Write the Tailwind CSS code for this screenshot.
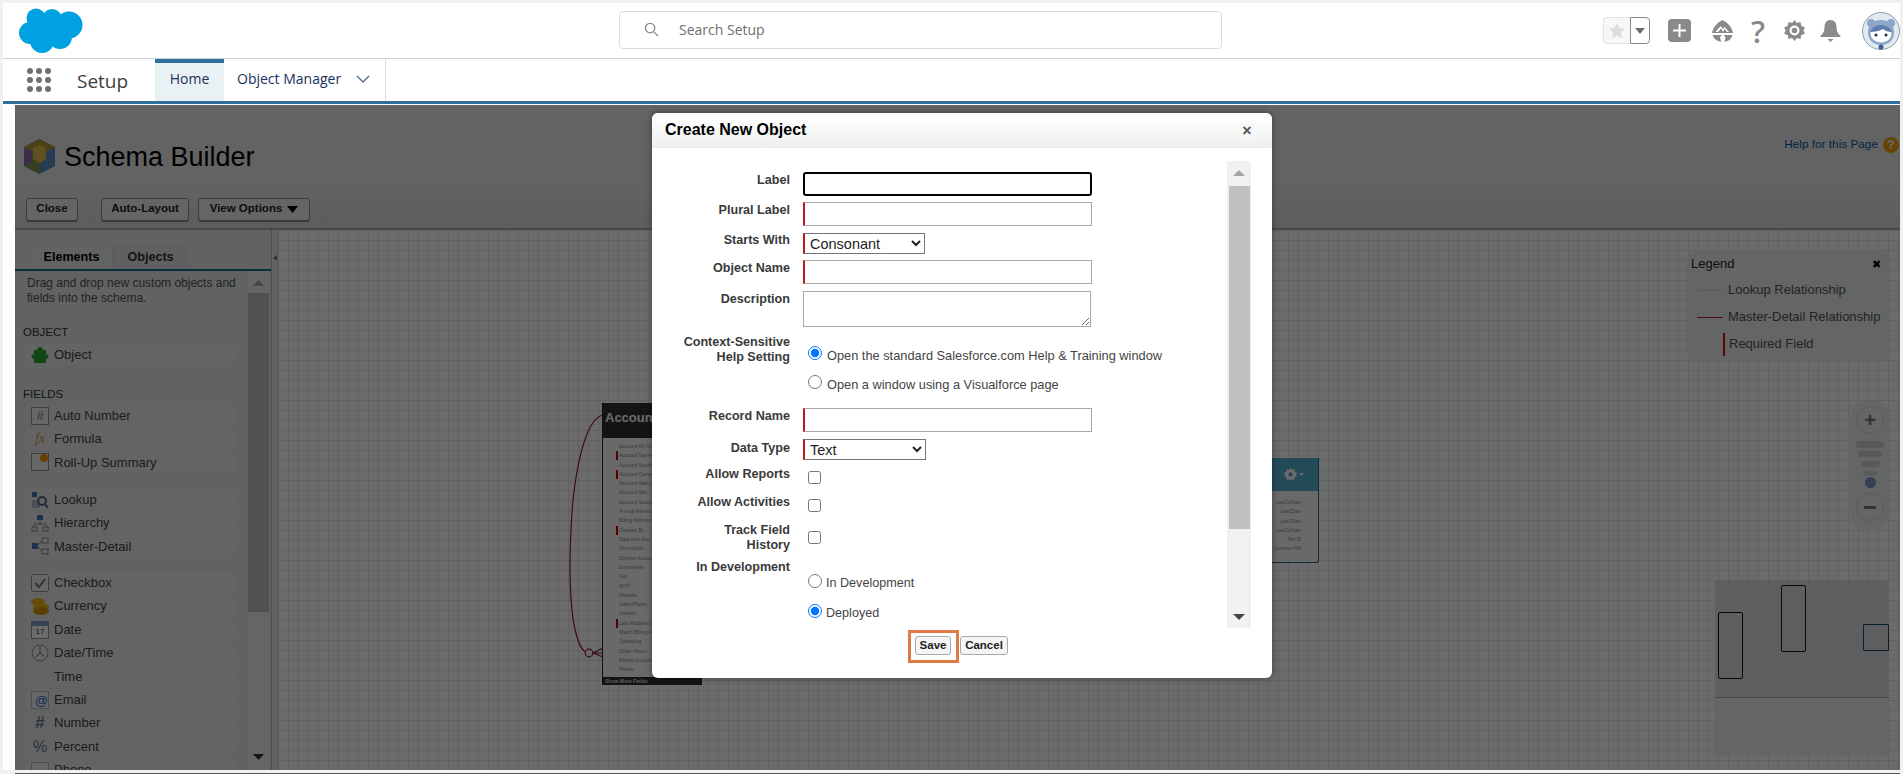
<!DOCTYPE html>
<html lang="en">
<head>
<meta charset="utf-8">
<title>Schema Builder</title>
<script src="https://cdn.jsdelivr.net/npm/@tailwindcss/browser@4"></script>
</head>
<body class="m-0">
<div class="relative w-[1903px] h-[774px] overflow-hidden bg-[#f1f1f1] pt-[3px] pr-[3px] pl-[3px] flex flex-col font-['Liberation_Sans',Arial,sans-serif] text-[#222]">

  <!-- global header -->
  <header class="h-[56px] shrink-0 bg-white border-b border-[#c4cfdd] flex items-center relative">
    <svg class="ml-[16px] w-[64px] h-[46px] shrink-0" viewBox="0 0 64 46" fill="#00a1e0">
      <circle cx="17" cy="10" r="9.5"/><circle cx="33" cy="11" r="10"/><circle cx="50" cy="17" r="13.5"/><circle cx="11" cy="25" r="11"/><circle cx="23" cy="33" r="12"/><circle cx="41" cy="29" r="12"/><rect x="12" y="10" width="38" height="22"/>
    </svg>
    <div class="ml-[536px] mb-[2px] w-[604px] h-[38px] border border-[#dddbda] rounded-[4px] flex items-center pl-[24px]">
      <svg class="w-[15px] h-[15px]" viewBox="0 0 16 16" fill="none" stroke="#8a8886" stroke-width="1.4"><circle cx="6.5" cy="6.5" r="5"/><path d="M10.5 10.5L15 15"/></svg>
      <span class="ml-[20px] text-[14px] text-[#706e6b] font-['Open_Sans',sans-serif]">Search Setup</span>
    </div>
    <div class="ml-[381px] flex items-center h-full">
      <div class="w-[47px] h-[27px] flex">
        <div class="w-[27px] flex items-center justify-center bg-[#f7f7f7] border border-r-0 border-[#e3e3e3] rounded-l-[4px]">
          <svg class="w-[18px] h-[18px]" viewBox="0 0 20 20" fill="#dcdcdc"><path d="M10 1l2.7 6 6.3.6-4.8 4.2 1.5 6.4L10 14.8 4.300 18.200l1.500-6.400L1 7.600 7.300 7z"/></svg>
        </div>
        <div class="flex-1 flex items-center justify-center border border-[#8a8a8a] rounded-r-[4px]">
          <svg class="w-[10px] h-[6px]" viewBox="0 0 10 6" fill="#706e6b"><path d="M0 0h10L5 6z"/></svg>
        </div>
      </div>
      <svg class="ml-[18px] w-[23px] h-[23px]" viewBox="0 0 23 23"><rect width="23" height="23" rx="4" fill="#8a8a8a"/><path d="M11.500 5v13M5 11.500h13" stroke="#fff" stroke-width="2"/></svg>
      <svg class="ml-[21px] w-[21px] h-[22px]" viewBox="0 0 21 22" fill="#8a8a8a"><path d="M10.500 0C15 2 20 7 21 13H0C1 7 6 2 10.500 0z"/><path d="M.5 15h9.500l-2 2 1 5C5 21 2 19 .5 15zM20.500 15H12l1.500 3-1 4c4-1 7-3 8-7z"/><path d="M3.500 12l5-6 2.500 3 1.500-2 4.500 5h-2l-2.500-3-1.500 3-2-3.500L6 12z" fill="#fff"/></svg>
      <span class="ml-[18px] w-[15px] text-[31px] leading-[32px] font-semibold text-[#8a8a8a] font-['Open_Sans',sans-serif]">?</span>
      <svg class="ml-[18px] w-[21px] h-[21px]" viewBox="0 0 21 21"><path d="M10.500 0l2.300 3 3.700-1 .7 3.800 3.800 1.700-1.700 3 1.700 3-3.800 1.700-.7 3.800-3.700-1-2.300 3-2.300-3-3.700 1-.7-3.800L0 13.500l1.700-3L0 7.500l3.800-1.700.7-3.800 3.700 1z" fill="#8a8a8a"/><circle cx="10.500" cy="10.500" r="5" fill="#fff"/><circle cx="10.500" cy="10.500" r="2.800" fill="#8a8a8a"/></svg>
      <svg class="ml-[15px] w-[21px] h-[22px]" viewBox="0 0 21 22" fill="#8a8a8a"><path d="M10.500 0c4 0 6 3 6 7 0 4 1 6 4 9v1H.5v-1c3-3 4-5 4-9 0-4 2-7 6-7z"/><path d="M7.500 19h6l-3 3z"/></svg>
      <svg class="ml-[21px] w-[38px] h-[38px]" viewBox="0 0 38 38">
        <circle cx="19" cy="19" r="18.500" fill="#e3e9f1" stroke="#8e9bb0"/>
        <circle cx="9" cy="11" r="4" fill="#8ea6cc"/><circle cx="29" cy="11" r="4" fill="#8ea6cc"/>
        <path d="M6 20c0-8 6-12 13-12s13 4 13 12c0 8-5 13-13 13S6 28 6 20z" fill="#8ea6cc"/>
        <ellipse cx="19" cy="22" rx="10.500" ry="8.500" fill="#fff"/>
        <path d="M8 20c3-6 7-7 11-7s8 1 11 7c-4 0-7-1-9-3-3 2-8 3-13 3z" fill="#5f7fb0"/>
        <circle cx="14" cy="23" r="1.500" fill="#1c2f4e"/><circle cx="24" cy="23" r="1.500" fill="#1c2f4e"/>
        <circle cx="19" cy="35" r="2.500" fill="#3c5f92"/>
      </svg>
    </div>
  </header>

  <!-- app nav -->
  <nav class="h-[42px] shrink-0 bg-white flex items-stretch">
    <div class="ml-[24px] w-[24px] self-center grid grid-cols-3 gap-[3px]">
      <span class="w-[6px] h-[6px] rounded-full bg-[#706e6b]"></span><span class="w-[6px] h-[6px] rounded-full bg-[#706e6b]"></span><span class="w-[6px] h-[6px] rounded-full bg-[#706e6b]"></span>
      <span class="w-[6px] h-[6px] rounded-full bg-[#706e6b]"></span><span class="w-[6px] h-[6px] rounded-full bg-[#706e6b]"></span><span class="w-[6px] h-[6px] rounded-full bg-[#706e6b]"></span>
      <span class="w-[6px] h-[6px] rounded-full bg-[#706e6b]"></span><span class="w-[6px] h-[6px] rounded-full bg-[#706e6b]"></span><span class="w-[6px] h-[6px] rounded-full bg-[#706e6b]"></span>
    </div>
    <span class="ml-[26px] w-[78px] self-center pt-[2px] text-[19px] text-[#3e3e3c] font-['Open_Sans',sans-serif]">Setup</span>
    <a class="w-[69px] bg-[#eaf1f5] border-t-[4px] border-[#2e6f9e] flex items-center justify-center text-[14px] text-[#16325c] font-['Open_Sans',sans-serif] pb-[7px]">Home</a>
    <a class="w-[162px] border-r border-[#dddbda] flex items-center pl-[13px] text-[14px] text-[#16325c] font-['Open_Sans',sans-serif] pb-[3px]">Object Manager
      <svg class="ml-[15px] w-[14px] h-[8px]" viewBox="0 0 14 8" fill="none" stroke="#54698d" stroke-width="1.300"><path d="M1 1l6 6 6-6"/></svg>
    </a>
  </nav>
  <div class="h-[3px] shrink-0 bg-[#2e6f9e]"></div>
  <div class="h-[1px] shrink-0 bg-white"></div>

  <!-- page under the modal mask -->
  <main class="flex-1 min-h-0 bg-white pl-[12px] flex">
    <div class="relative flex-1 min-w-0 flex flex-col overflow-hidden">
      <!-- page head -->
      <div class="h-[125px] shrink-0 bg-gradient-to-b from-[#ececec] from-60% to-[#dcdddd] border-b-[2px] border-[#aeaeae] relative">
        <div class="flex items-center pt-[34px] pl-[9px] h-[69px]">
          <svg class="w-[31px] h-[35px]" viewBox="0 0 31 35"><path d="M15.500 0L31 8v19l-15.500 8L0 27V8z" fill="#5a8fc4"/><path d="M15.500 0L31 8l-15.500 8L0 8z" fill="#b79a3b"/><path d="M0 8l15.500 8v19L0 27z" fill="#7c9a4a"/><path d="M0 8l8 4v11L0 27z" fill="#8e6bb0"/><path d="M9 9l6.500-3L22 9v11l-6.500 4L9 20z" fill="#e0c24a"/></svg>
          <h1 class="ml-[9px] mt-[2px] text-[27px] leading-none text-black font-normal">Schema Builder</h1>
        </div>
        <div class="flex items-center pl-[11px] mt-[23px] h-[24px] text-[11.500px] font-bold text-[#222]">
          <button class="w-[52px] h-[23px] rounded-[3px] border border-[#8f8f8f] bg-[#f0f0f0] shadow-[0_1px_0_#888]">Close</button>
          <span class="ml-[11px] w-px h-[32px] bg-[#dcdcdc]"></span>
          <button class="ml-[11px] w-[88px] h-[23px] rounded-[3px] border border-[#8f8f8f] bg-[#f0f0f0] shadow-[0_1px_0_#888]">Auto-Layout</button>
          <button class="ml-[9px] w-[112px] h-[23px] rounded-[3px] border border-[#8f8f8f] bg-[#f0f0f0] shadow-[0_1px_0_#888] flex items-center justify-center gap-[5px]">View Options
            <svg class="w-[11px] h-[7px]" viewBox="0 0 11 7" fill="#000"><path d="M0 0h11L5.500 7z"/></svg>
          </button>
          <span class="ml-[12px] w-px h-[32px] bg-[#dcdcdc]"></span>
        </div>
        <div class="absolute right-[1px] top-[31px] flex items-center text-[11.800px] text-[#015ba7]">Help for this Page
          <span class="ml-[5px] w-[16px] h-[16px] rounded-full bg-[#f5a10f] text-white font-bold text-[12px] leading-[16px] text-center">?</span>
        </div>
      </div>

      <div class="flex-1 min-h-0 flex">
        <!-- sidebar -->
        <aside class="w-[257px] shrink-0 bg-[#e6e9ea] border-r border-[#bbb] flex flex-col overflow-hidden">
          <div class="h-[41px] shrink-0 pt-[15px] pl-[15px] flex border-b-[2px] border-[#1a6d92] text-[12.600px]">
            <div class="w-[83px] h-[24px] bg-[#e9ebec] border border-b-0 border-[#dcdfe0] rounded-t-[3px] flex items-center justify-center font-bold text-black">Elements</div>
            <div class="w-[75px] h-[24px] bg-[#e2e5e6] border border-b-0 border-[#dcdfe0] rounded-t-[3px] flex items-center justify-center font-bold text-[#333]">Objects</div>
          </div>
          <div class="flex-1 min-h-0 flex">
            <div class="w-[233px] shrink-0 overflow-hidden">
              <p class="mt-[5px] ml-[12px] pb-[5px] text-[12px] leading-[14.500px] text-[#555] border-b border-[#dadddf]">Drag and drop new custom objects and fields into the schema.</p>
              <div class="mt-[14px] ml-[8px] text-[11.500px] leading-[14px] text-[#333]">OBJECT</div>
              <div class="mt-[5px] ml-[10px] w-[212px] flex flex-col gap-[2.4px] text-[13px] text-[#444]">
                <div class="h-[21px] rounded-[8px] bg-[#eeefef] flex items-center">
                  <svg class="ml-[6px] w-[18px] h-[18px]" viewBox="0 0 18 18" fill="#2ea836"><path d="M6 4a3 3 0 1 1 6 0h3v4a2.500 2.500 0 1 1 0 5v4H3v-4a2.500 2.500 0 1 1 0-5V4z"/></svg>
                  <span class="ml-[5px]">Object</span>
                </div>
              </div>
              <div class="mt-[22px] ml-[8px] text-[11.500px] leading-[14px] text-[#333]">FIELDS</div>
              <div class="mt-[4px] ml-[10px] w-[212px] flex flex-col gap-[2.4px] text-[13px] text-[#444]">
                <div class="h-[21px] rounded-[8px] bg-[#eeefef] flex items-center"><span class="ml-[6px] w-[18px] h-[18px] border border-[#8a94a0] bg-[#f6f6f6] text-[13px] leading-[16px] text-center text-[#5f7da0]">#</span><span class="ml-[5px]">Auto Number</span></div>
                <div class="h-[21px] rounded-[8px] bg-[#eeefef] flex items-center"><span class="ml-[6px] w-[18px] h-[18px] text-[14px] leading-[17px] text-center italic text-[#d19a3a] font-['Liberation_Serif',serif]">fx</span><span class="ml-[5px]">Formula</span></div>
                <div class="h-[21px] rounded-[8px] bg-[#eeefef] flex items-center"><span class="relative ml-[6px] w-[18px] h-[18px] border border-[#8a94a0] bg-[#f6f6f6]"><span class="absolute right-0 top-0 w-[8px] h-[8px] rounded-full bg-[#f59a00]"></span></span><span class="ml-[5px]">Roll-Up Summary</span></div>
                <div class="mt-[14px] h-[21px] rounded-[8px] bg-[#eeefef] flex items-center"><svg class="ml-[6px] w-[18px] h-[18px]" viewBox="0 0 18 18" fill="none"><rect x="1" y="1" width="5" height="5" fill="#3f76c4"/><rect x="1" y="9" width="8" height="8" fill="#bbb"/><circle cx="11" cy="10" r="4" stroke="#4a6a8a" stroke-width="2"/><path d="M14 13l3 4" stroke="#4a6a8a" stroke-width="2"/></svg><span class="ml-[5px]">Lookup</span></div>
                <div class="h-[21px] rounded-[8px] bg-[#eeefef] flex items-center"><svg class="ml-[6px] w-[18px] h-[18px]" viewBox="0 0 18 18" fill="none" stroke="#8a8a8a"><rect x="6" y="1" width="6" height="5" fill="#3f76c4" stroke="none"/><path d="M9 6v4M3 13v-3h12v3"/><rect x="1" y="13" width="5" height="4" fill="#eee"/><rect x="12" y="13" width="5" height="4" fill="#eee"/></svg><span class="ml-[5px]">Hierarchy</span></div>
                <div class="h-[21px] rounded-[8px] bg-[#eeefef] flex items-center"><svg class="ml-[6px] w-[18px] h-[18px]" viewBox="0 0 18 18" fill="none" stroke="#8a8a8a"><rect x="1" y="6" width="6" height="6" fill="#3f76c4" stroke="none"/><path d="M7 8l4-4M7 10l4 4"/><rect x="11" y="1" width="6" height="5" fill="#eee"/><rect x="11" y="12" width="6" height="5" fill="#eee"/></svg><span class="ml-[5px]">Master-Detail</span></div>
                <div class="mt-[13px] h-[21px] rounded-[8px] bg-[#eeefef] flex items-center"><svg class="ml-[6px] w-[18px] h-[18px]" viewBox="0 0 18 18" fill="none"><rect x=".5" y=".5" width="17" height="17" rx="2" fill="#f6f6f6" stroke="#8a94a0"/><path d="M4 9l4 4 6-8" stroke="#777" stroke-width="2"/></svg><span class="ml-[5px]">Checkbox</span></div>
                <div class="h-[21px] rounded-[8px] bg-[#eeefef] flex items-center"><svg class="ml-[6px] w-[18px] h-[18px]" viewBox="0 0 18 18" fill="#f0b918"><ellipse cx="7" cy="5" rx="7" ry="4"/><ellipse cx="10" cy="10" rx="8" ry="4"/><ellipse cx="10" cy="14" rx="8" ry="4" fill="#d59c10"/></svg><span class="ml-[5px]">Currency</span></div>
                <div class="h-[21px] rounded-[8px] bg-[#eeefef] flex items-center"><span class="ml-[6px] w-[18px] h-[18px] border border-[#8a94a0] border-t-[5px] border-t-[#7f9fc4] bg-white text-[8px] leading-[12px] text-center text-[#333]">17</span><span class="ml-[5px]">Date</span></div>
                <div class="h-[21px] rounded-[8px] bg-[#eeefef] flex items-center"><svg class="ml-[6px] w-[18px] h-[18px]" viewBox="0 0 18 18" fill="#f3f3f3" stroke="#8a94a0"><circle cx="9" cy="9" r="8"/><path d="M9 3v6l-4 4M9 9l4 3" fill="none" stroke="#666"/></svg><span class="ml-[5px]">Date/Time</span></div>
                <div class="h-[21px] rounded-[8px] bg-[#eeefef] flex items-center"><span class="ml-[29px]">Time</span></div>
                <div class="h-[21px] rounded-[8px] bg-[#eeefef] flex items-center"><span class="ml-[6px] w-[18px] h-[18px] border border-[#b9b9b9] bg-[#f6f6f6] text-[13px] leading-[17px] text-right text-[#1f6fc4]">@</span><span class="ml-[5px]">Email</span></div>
                <div class="h-[21px] rounded-[8px] bg-[#eeefef] flex items-center"><span class="ml-[6px] w-[18px] text-[17px] leading-[18px] text-center text-[#687a90] font-bold">#</span><span class="ml-[5px]">Number</span></div>
                <div class="h-[21px] rounded-[8px] bg-[#eeefef] flex items-center"><span class="ml-[6px] w-[18px] text-[16px] leading-[18px] text-center text-[#687a90]">%</span><span class="ml-[5px]">Percent</span></div>
                <div class="h-[21px] rounded-[8px] bg-[#eeefef] flex items-center"><span class="ml-[6px] w-[18px] h-[16px] border border-[#b9b9b9] bg-[#f6f6f6]"></span><span class="ml-[5px]">Phone</span></div>
              </div>
            </div>
            <div class="w-[21px] shrink-0 bg-[#f0f1f1] flex flex-col items-center">
              <svg class="mt-[9px] w-[11px] h-[6px]" viewBox="0 0 11 6" fill="#a3a3a3"><path d="M5.500 0L11 6H0z"/></svg>
              <div class="mt-[7px] w-full h-[319px] bg-[#c1c1c1]"></div>
              <svg class="mt-[142px] w-[11px] h-[6px]" viewBox="0 0 11 6" fill="#333"><path d="M0 0h11L5.500 6z"/></svg>
            </div>
          </div>
        </aside>
        <!-- collapse strip -->
        <div class="w-[6px] shrink-0 bg-[#e6e9ea] border-r border-[#cfcfcf] flex items-start pt-[25px] justify-center">
          <span class="w-0 h-0 border-y-[3px] border-y-transparent border-r-[4px] border-r-[#5f7da0]"></span>
        </div>

        <!-- canvas -->
        <div class="relative flex-1 min-w-0 bg-white bg-[linear-gradient(#e6e8e8_1px,transparent_1px),linear-gradient(90deg,#e6e8e8_1px,transparent_1px)] bg-[size:10px_10px]">
          <!-- Master-detail relationship line, drawn from Account's header round to its own row -->
          <svg class="absolute left-[278px] top-[170px] w-[50px] h-[270px]" viewBox="0 0 50 270" fill="none" stroke="#8d1f2e" stroke-width="1.200">
            <path d="M47 15C32 18 22 55 17 100C12 160 13 215 22 240C24 247 26 250 30 252"/>
            <circle cx="33" cy="253" r="3.800"/><path d="M37 253l10-5M37 253h10M37 253l10 4"/>
          </svg>
          <!-- Account node -->
          <div class="absolute left-[324px] top-[173px] w-[100px] h-[282px] bg-[#fbfbfb] border-l border-[#222] flex flex-col">
            <div class="h-[35px] shrink-0 bg-[#303030] pl-[2px] pt-[5px] text-[13px] font-bold text-white">Account</div>
            <div class="flex-1 pt-[4px] pl-[16px] text-[5px] leading-[9.3px] text-[#8a8a8a]">
              <div>Account My Org</div>
              <div class="relative"><span class="absolute -left-[3px] top-0 w-[2px] h-[9px] bg-[#c00]"></span>Account Name</div>
              <div>Account Number</div>
              <div class="relative"><span class="absolute -left-[3px] top-0 w-[2px] h-[9px] bg-[#c00]"></span>Account Owner</div>
              <div>Account Rating</div><div>Account Site</div><div>Account Source</div><div>Annual Revenue</div><div>Billing Address</div>
              <div class="relative"><span class="absolute -left-[3px] top-0 w-[2px] h-[9px] bg-[#c00]"></span>Created By</div>
              <div>Data.com Key</div><div>Description</div><div>Division Account</div><div>Employees</div><div>Fax</div><div>gpstr</div><div>Website</div><div>Index Phone</div><div>Industry</div>
              <div class="relative"><span class="absolute -left-[3px] top-0 w-[2px] h-[9px] bg-[#c00]"></span>Last Modified By</div>
              <div>Match Billing Address</div><div>Operating</div><div>Order Hours</div><div>Parent Account</div><div>Phone</div>
            </div>
            <div class="h-[8px] shrink-0 bg-[#303030] pl-[2px] text-[5px] leading-[8px] font-bold text-[#ddd]">Show More Fields</div>
          </div>
          <!-- Contact node -->
          <div class="absolute left-[980px] top-[228px] w-[61px] h-[105px] bg-[#fbfbfb] border-r border-b border-[#1f6d8e] rounded-br-[3px] flex flex-col overflow-hidden">
            <div class="h-[33px] shrink-0 bg-[#54b0d0] flex items-center justify-end pr-[14px] gap-[2px]">
              <svg class="w-[13px] h-[13px]" viewBox="0 0 21 21"><path d="M10.500 0l2.300 3 3.700-1 .7 3.800 3.800 1.700-1.700 3 1.700 3-3.800 1.700-.7 3.800-3.700-1-2.300 3-2.300-3-3.700 1-.7-3.800L0 13.500l1.700-3L0 7.500l3.800-1.700.7-3.800 3.700 1z" fill="#fff"/><circle cx="10.500" cy="10.500" r="3.500" fill="#54b0d0"/></svg>
              <svg class="w-[5px] h-[3px]" viewBox="0 0 5 3" fill="#fff"><path d="M0 0h5L2.500 3z"/></svg>
            </div>
            <div class="pt-[7px] pr-[17px] text-right text-[4.500px] leading-[9.300px] text-[#8a8a8a]">
              <div>LastCurDate</div><div>LastCDate</div><div>LastCDate</div><div>LastCurDate</div><div>Text ID</div><div>Comment Ref</div>
            </div>
          </div>
          <!-- legend -->
          <div class="absolute left-[1409px] top-[20px] w-[203px] h-[112px] bg-[#eef0f1] rounded-[10px] text-[13px] text-[#555] pl-[4px] pt-[6px]">
            <div class="flex items-center justify-between pr-[9px] h-[16px] text-[#222]"><span>Legend</span><span class="text-[11px] text-black">✖</span></div>
            <div class="mt-[9px] h-[18px] flex items-center"><span class="ml-[6px] w-[26px] h-px bg-[#d4d6d8]"></span><span class="ml-[5px]">Lookup Relationship</span></div>
            <div class="mt-[9px] h-[18px] flex items-center"><span class="ml-[6px] w-[26px] h-px bg-[#a22]"></span><span class="ml-[5px]">Master-Detail Relationship</span></div>
            <div class="mt-[9px] h-[18px] flex items-center"><span class="ml-[32px] w-[2px] h-[23px] bg-[#d0111b]"></span><span class="ml-[4px]">Required Field</span></div>
          </div>
          <!-- zoom control -->
          <div class="absolute left-[1572px] top-[171px] w-[40px] h-[128px] bg-[#eef0f1] rounded-[16px] flex flex-col items-center pt-[5px]">
            <span class="w-[28px] h-[28px] rounded-full border border-[#d8dadb] bg-[#f1f2f2] flex items-center justify-center text-[20px] font-bold leading-none text-[#777]">+</span>
            <span class="mt-[7px] w-[28px] h-[7px] rounded-[3px] bg-[#d2d4d5]"></span>
            <span class="mt-[3px] w-[24px] h-[6px] rounded-[3px] bg-[#d2d4d5]"></span>
            <span class="mt-[4px] w-[19px] h-[6px] rounded-[3px] bg-[#d2d4d5]"></span>
            <span class="mt-[4px] w-[14px] h-[5px] rounded-[3px] bg-[#d2d4d5]"></span>
            <span class="mt-[1px] w-[11px] h-[11px] rounded-full bg-[#7e9ad0]"></span>
            <span class="mt-[5px] w-[28px] h-[28px] rounded-full border border-[#d8dadb] bg-[#f1f2f2] flex items-center justify-center"><span class="w-[12px] h-[3px] bg-[#777]"></span></span>
          </div>
          <!-- minimap -->
          <div class="absolute left-[1437px] top-[350px] w-[174px] h-[176px] rounded-[3px] bg-[#eef0f0] flex flex-col overflow-hidden">
            <div class="relative h-[118px] shrink-0 bg-[#dfe3e5] border-b border-[#aaa]">
              <div class="absolute left-[3px] top-[32px] w-[25px] h-[67px] border border-[#111] rounded-[2px]"></div>
              <div class="absolute left-[66px] top-[5px] w-[25px] h-[67px] border border-[#111] rounded-[2px]"></div>
              <div class="absolute left-[148px] top-[44px] w-[26px] h-[27px] border border-[#0d4a66] rounded-[1px]"></div>
            </div>
          </div>
        </div>
      </div>
      <!-- mask over the page -->
      <div class="absolute inset-0 bg-black/58"></div>
    </div>
  </main>
  <div class="h-[3px] shrink-0"></div>
  <div class="h-[1px] shrink-0 ml-[12px] bg-[#555]"></div>

  <!-- modal -->
  <section class="absolute left-[652px] top-[113px] w-[620px] h-[565px] bg-white rounded-[6px] shadow-[0_0_6px_rgba(0,0,0,0.4)] flex flex-col">
    <div class="h-[35px] shrink-0 rounded-t-[6px] bg-gradient-to-b from-white to-[#eef1f1] border-b border-[#e9ecec] flex items-center justify-between pl-[13px] pr-[17px]">
      <h2 class="text-[16px] font-bold text-black">Create New Object</h2>
      <span class="w-[16px] h-[16px] mt-[2px] bg-[#f6f7f7] text-center text-[16px] leading-[16px] font-bold text-[#555]">×</span>
    </div>
    <div class="flex-1 min-h-0 flex pl-0">
      <form class="w-[575px] pt-[24px] text-[12.600px] text-[#3a3a3a]">
        <div class="h-[23px] flex"><label class="w-[138px] text-right font-bold leading-[16px]">Label</label><input class="ml-[13px] w-[289px] h-[24px] border-2 border-black rounded-[3px] bg-white"></div>
        <div class="mt-[7px] h-[24px] flex"><label class="w-[138px] text-right font-bold leading-[16px]">Plural Label</label><input class="ml-[13px] w-[289px] h-[24px] border border-[#a9a9a9] border-l-[2px] border-l-[#b71c1c] bg-white"></div>
        <div class="mt-[7px] h-[21px] flex"><label class="w-[138px] text-right font-bold leading-[14px]">Starts With</label><select class="ml-[13px] w-[122px] h-[21px] border border-[#767676] border-l-[2px] border-l-[#b71c1c] bg-white text-[14.500px] text-[#222] pl-[1px]"><option>Consonant</option></select></div>
        <div class="mt-[6px] h-[24px] flex"><label class="w-[138px] text-right font-bold leading-[16px]">Object Name</label><input class="ml-[13px] w-[289px] h-[24px] border border-[#a9a9a9] border-l-[2px] border-l-[#b71c1c] bg-white"></div>
        <div class="mt-[7px] h-[36px] flex"><label class="w-[138px] text-right font-bold leading-[16px]">Description</label><textarea class="ml-[13px] w-[288px] h-[36px] border border-[#a9a9a9] bg-white"></textarea></div>
        <div class="mt-[6px] h-[44px] flex"><label class="w-[138px] pt-[2px] text-right font-bold leading-[15px]">Context-Sensitive<br>Help Setting</label>
          <div class="ml-[18px] mt-[8px] flex items-center h-[24px] self-start text-[12.800px] text-[#444]"><input type="radio" name="h" checked class="w-[14px] h-[14px] m-0"><span class="ml-[5px] mt-[5px]">Open the standard Salesforce.com Help &amp; Training window</span></div>
        </div>
        <div class="mt-[-7px] h-[24px] pl-[156px] flex items-center text-[12.800px] text-[#444]"><input type="radio" name="h" class="w-[14px] h-[14px] m-0"><span class="ml-[5px] mt-[5px]">Open a window using a Visualforce page</span></div>
        <div class="mt-[14px] h-[24px] flex"><label class="w-[138px] text-right font-bold leading-[16px]">Record Name</label><input class="ml-[13px] w-[289px] h-[24px] border border-[#a9a9a9] border-l-[2px] border-l-[#b71c1c] bg-white"></div>
        <div class="mt-[7px] h-[21px] flex"><label class="w-[138px] text-right font-bold leading-[18px]">Data Type</label><select class="ml-[13px] w-[123px] h-[21px] border border-[#767676] border-l-[2px] border-l-[#b71c1c] bg-white text-[14.500px] text-[#222] pl-[1px]"><option>Text</option></select></div>
        <div class="mt-[6px] h-[22px] flex"><label class="w-[138px] text-right font-bold leading-[16px]">Allow Reports</label><input type="checkbox" class="ml-[18px] mt-[5px] w-[13px] h-[13px] m-0"></div>
        <div class="mt-[6px] h-[22px] flex"><label class="w-[138px] text-right font-bold leading-[16px]">Allow Activities</label><input type="checkbox" class="ml-[18px] mt-[5px] w-[13px] h-[13px] m-0"></div>
        <div class="mt-[6px] h-[32px] flex"><label class="w-[138px] pt-[1px] text-right font-bold leading-[15px]">Track Field<br>History</label><input type="checkbox" class="ml-[18px] mt-[9px] w-[13px] h-[13px] m-0"></div>
        <div class="mt-[3px] h-[24px] flex"><label class="w-[138px] pt-[3px] text-right font-bold leading-[14px]">In Development</label></div>
        <div class="mt-[-12px] h-[24px] pl-[156px] flex items-center text-[12.600px] text-[#444]"><input type="radio" name="d" class="w-[14px] h-[14px] m-0"><span class="ml-[4px] mt-[4px]">In Development</span></div>
        <div class="mt-[6px] h-[24px] pl-[156px] flex items-center text-[12.600px] text-[#444]"><input type="radio" name="d" checked class="w-[14px] h-[14px] m-0"><span class="ml-[4px] mt-[4px]">Deployed</span></div>
      </form>
      <div class="mt-[13px] h-[467px] w-[24px] bg-[#f1f1f1] flex flex-col items-center">
        <svg class="mt-[9px] w-[12px] h-[6px]" viewBox="0 0 12 6" fill="#a3a3a3"><path d="M6 0l6 6H0z"/></svg>
        <div class="mt-[10px] w-[21px] h-[343px] bg-[#c1c1c1]"></div>
        <svg class="mt-[85px] w-[12px] h-[6px]" viewBox="0 0 12 6" fill="#444"><path d="M0 0h12L6 6z"/></svg>
      </div>
    </div>
    <div class="absolute left-[256px] top-[517px] w-[51px] h-[33px] border-[3px] border-[#e07b45]"></div>
    <div class="absolute left-[263px] top-[523px] flex gap-[2px] text-[11.500px] text-[#222]">
      <button class="w-[36px] h-[19px] rounded-[3px] border border-[#a9a9a9] bg-[#f5f5f5] font-bold">Save</button>
      <button class="ml-[7px] w-[48px] h-[19px] rounded-[3px] border border-[#a9a9a9] bg-[#f5f5f5] font-bold">Cancel</button>
    </div>
  </section>
</div>
</body>
</html>
